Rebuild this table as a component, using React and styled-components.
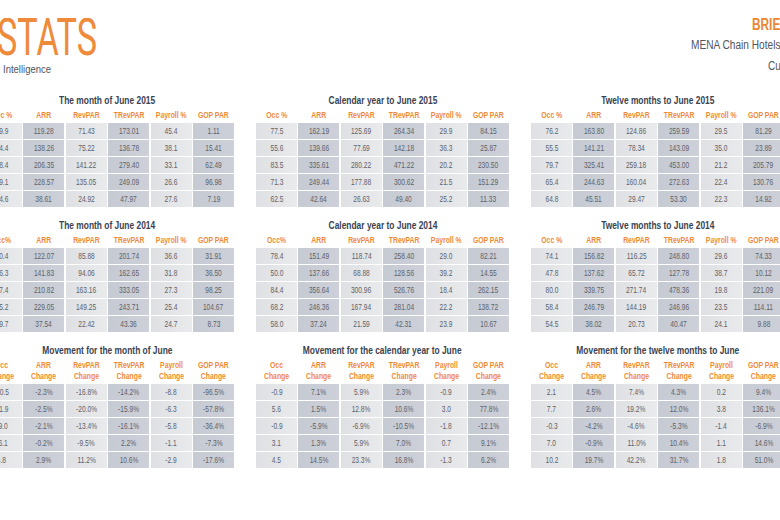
import React from "react";
import styled, { createGlobalStyle } from "styled-components";

const GlobalStyle = createGlobalStyle`
  html, body {
    margin: 0;
    padding: 0;
    background: #ffffff;
  }
  body {
    width: 780px;
    height: 520px;
    overflow: hidden;
  }
`;

const Page = styled.div`
  width: 803px;
  margin-left: -19px;
  font-family: "Liberation Sans", Arial, sans-serif;
`;

// the report is set in a condensed face: squeeze the ordinary sans to match
const Squeeze = styled.span`
  display: inline-block;
  white-space: nowrap;
  transform: scaleX(${(p) => p.$x || 0.75});
  transform-origin: ${(p) => p.$origin || "center"};
`;

const Header = styled.header`
  display: flex;
  justify-content: space-between;
  height: 93px;
`;

const Logo = styled.div`
  display: flex;
  flex-direction: column;
  padding-top: 18px;
  margin-left: 16px;
`;

const Tagline = styled.div`
  margin: 8px 0 0 6px;
  font-size: 10px;
  line-height: 12px;
  color: #4f545c;
`;

const Masthead = styled.div`
  width: 93px;
  padding-top: 14px;
  display: flex;
  flex-direction: column;
  white-space: nowrap;
`;

const Line = styled.div`
  padding-left: ${(p) => p.$indent || 0}px;
  font-size: ${(p) => (p.$strong ? "16px" : "12.5px")};
  font-weight: ${(p) => (p.$strong ? 700 : 400)};
  line-height: 21px;
  color: ${(p) => (p.$strong ? "#ec8532" : "#50555e")};
`;

const Board = styled.div`
  display: grid;
  grid-template-columns: repeat(3, 253px);
  column-gap: 22px;
  row-gap: 11px;
`;

const Section = styled.section`
  display: flex;
  flex-direction: column;
`;

const Title = styled.h3`
  display: flex;
  justify-content: center;
  margin: 0;
  font-size: 10.5px;
  line-height: 14px;
  font-weight: 700;
  color: #3b4250;
`;

const Cols = styled.div`
  display: grid;
  grid-template-columns: repeat(6, 1fr);
  column-gap: 1.5px;
`;

const HeadRow = styled(Cols)`
  margin: 3px 0 2px;
`;

const HeadCell = styled.div`
  display: flex;
  justify-content: center;
  font-size: 9px;
  line-height: 11px;
  font-weight: 700;
  text-align: center;
  color: #ef8a36;
`;

const Rows = styled.div`
  display: flex;
  flex-direction: column;
  gap: 1px;
`;

const Cell = styled.div`
  display: flex;
  justify-content: center;
  height: 16px;
  line-height: 16px;
  font-size: 9.2px;
  color: #5e626a;
  background: ${(p) =>
    p.$dark
      ? "linear-gradient(to right, #c6cad2, #cdd0d8)"
      : "linear-gradient(to right, #dfe0e3, #e9eaec)"};
`;

const heads2015 = ["Occ %", "ARR", "RevPAR", "TRevPAR", "Payroll %", "GOP PAR"];
const heads2014 = ["Occ%", "ARR", "RevPAR", "TRevPAR", "Payroll %", "GOP PAR"];
const headsMove = [
  ["Occ", "Change"],
  ["ARR", "Change"],
  ["RevPAR", "Change"],
  ["TRevPAR", "Change"],
  ["Payroll", "Change"],
  ["GOP PAR", "Change"],
];

const tables = [
  {
    title: "The month of June 2015",
    heads: heads2015,
    rows: [
      ["59.9", "119.28", "71.43", "173.01", "45.4", "1.11"],
      ["54.4", "138.26", "75.22", "136.78", "38.1", "15.41"],
      ["68.4", "206.35", "141.22", "279.40", "33.1", "62.49"],
      ["59.1", "228.57", "135.05", "249.09", "26.6", "96.98"],
      ["64.6", "38.61", "24.92", "47.97", "27.6", "7.19"],
    ],
  },
  {
    title: "Calendar year to June 2015",
    heads: heads2015,
    rows: [
      ["77.5", "162.19", "125.69", "264.34", "29.9", "84.15"],
      ["55.6", "139.66", "77.69", "142.18", "36.3", "25.87"],
      ["83.5", "335.61", "280.22", "471.22", "20.2", "230.50"],
      ["71.3", "249.44", "177.88", "300.62", "21.5", "151.29"],
      ["62.5", "42.64", "26.63", "49.40", "25.2", "11.33"],
    ],
  },
  {
    title: "Twelve months to June 2015",
    heads: heads2015,
    rows: [
      ["76.2", "163.80", "124.86", "259.59", "29.5", "81.29"],
      ["55.5", "141.21", "78.34", "143.09", "35.0", "23.89"],
      ["79.7", "325.41", "259.18", "453.00", "21.2", "205.79"],
      ["65.4", "244.63", "160.04", "272.63", "22.4", "130.76"],
      ["64.8", "45.51", "29.47", "53.30", "22.3", "14.92"],
    ],
  },
  {
    title: "The month of June 2014",
    heads: heads2014,
    rows: [
      ["70.4", "122.07", "85.88", "201.74", "36.6", "31.91"],
      ["66.3", "141.83", "94.06", "162.65", "31.8", "36.50"],
      ["77.4", "210.82", "163.16", "333.05", "27.3", "98.25"],
      ["65.2", "229.05", "149.25", "243.71", "25.4", "104.67"],
      ["59.7", "37.54", "22.42", "43.36", "24.7", "8.73"],
    ],
  },
  {
    title: "Calendar year to June 2014",
    heads: heads2014,
    rows: [
      ["78.4", "151.49", "118.74", "258.40", "29.0", "82.21"],
      ["50.0", "137.66", "68.88", "128.56", "39.2", "14.55"],
      ["84.4", "356.64", "300.96", "526.76", "18.4", "262.15"],
      ["68.2", "246.36", "167.94", "281.04", "22.2", "138.72"],
      ["58.0", "37.24", "21.59", "42.31", "23.9", "10.67"],
    ],
  },
  {
    title: "Twelve months to June 2014",
    heads: heads2015,
    rows: [
      ["74.1", "156.82", "116.25", "248.80", "29.6", "74.33"],
      ["47.8", "137.62", "65.72", "127.78", "38.7", "10.12"],
      ["80.0", "339.75", "271.74", "478.36", "19.8", "221.09"],
      ["58.4", "246.79", "144.19", "246.96", "23.5", "114.11"],
      ["54.5", "38.02", "20.73", "40.47", "24.1", "9.88"],
    ],
  },
  {
    title: "Movement for the month of June",
    heads: headsMove,
    rows: [
      ["-10.5", "-2.3%", "-16.8%", "-14.2%", "-8.8", "-96.5%"],
      ["-11.9", "-2.5%", "-20.0%", "-15.9%", "-6.3", "-57.8%"],
      ["-9.0", "-2.1%", "-13.4%", "-16.1%", "-5.8", "-36.4%"],
      ["-6.1", "-0.2%", "-9.5%", "2.2%", "-1.1", "-7.3%"],
      ["4.8", "2.9%", "11.2%", "10.6%", "-2.9", "-17.6%"],
    ],
  },
  {
    title: "Movement for the calendar year to June",
    heads: headsMove,
    rows: [
      ["-0.9", "7.1%", "5.9%", "2.3%", "-0.9", "2.4%"],
      ["5.6", "1.5%", "12.8%", "10.6%", "3.0", "77.8%"],
      ["-0.9", "-5.9%", "-6.9%", "-10.5%", "-1.8", "-12.1%"],
      ["3.1", "1.3%", "5.9%", "7.0%", "0.7", "9.1%"],
      ["4.5", "14.5%", "23.3%", "16.8%", "-1.3", "6.2%"],
    ],
  },
  {
    title: "Movement for the twelve months to June",
    heads: headsMove,
    rows: [
      ["2.1", "4.5%", "7.4%", "4.3%", "0.2", "9.4%"],
      ["7.7", "2.6%", "19.2%", "12.0%", "3.8", "136.1%"],
      ["-0.3", "-4.2%", "-4.6%", "-5.3%", "-1.4", "-6.9%"],
      ["7.0", "-0.9%", "11.0%", "10.4%", "1.1", "14.6%"],
      ["10.2", "19.7%", "42.2%", "31.7%", "1.8", "51.0%"],
    ],
  },
];

const LogoMark = () => (
  <svg width="100" height="38" viewBox="0 0 100 38">
    <text
      x="0"
      y="37"
      textLength="100"
      lengthAdjust="spacingAndGlyphs"
      fill="#ef8a3a"
      fontFamily="Roboto, 'Liberation Sans', sans-serif"
      fontWeight="400"
      fontSize="52"
    >
      STATS
    </text>
  </svg>
);

const StatTable = ({ title, heads, rows }) => (
  <Section>
    <Title>
      <Squeeze $x={0.8}>{title}</Squeeze>
    </Title>
    <HeadRow>
      {heads.map((h, i) => (
        <HeadCell key={i}>
          <Squeeze $x={0.76}>
            {Array.isArray(h) ? h.map((part) => <div key={part}>{part}</div>) : h}
          </Squeeze>
        </HeadCell>
      ))}
    </HeadRow>
    <Rows>
      {rows.map((row, r) => (
        <Cols key={r}>
          {row.map((v, c) => (
            <Cell key={c} $dark={c % 2 === 1}>
              <Squeeze $x={0.72}>{v}</Squeeze>
            </Cell>
          ))}
        </Cols>
      ))}
    </Rows>
  </Section>
);

export default function App() {
  return (
    <Page>
      <GlobalStyle />
      <Header>
        <Logo>
          <LogoMark />
          <Tagline>
            <Squeeze $x={0.95} $origin="left">Intelligence</Squeeze>
          </Tagline>
        </Logo>
        <Masthead>
          <Line $strong $indent={61}>
            <Squeeze $x={0.74} $origin="left">BRIEFING</Squeeze>
          </Line>
          <Line>
            <Squeeze $x={0.81} $origin="left">MENA Chain Hotels Performance</Squeeze>
          </Line>
          <Line $indent={77}>
            <Squeeze $x={0.8} $origin="left">Currency: USD</Squeeze>
          </Line>
        </Masthead>
      </Header>
      <Board>
        {tables.map((t) => (
          <StatTable key={t.title} {...t} />
        ))}
      </Board>
    </Page>
  );
}
